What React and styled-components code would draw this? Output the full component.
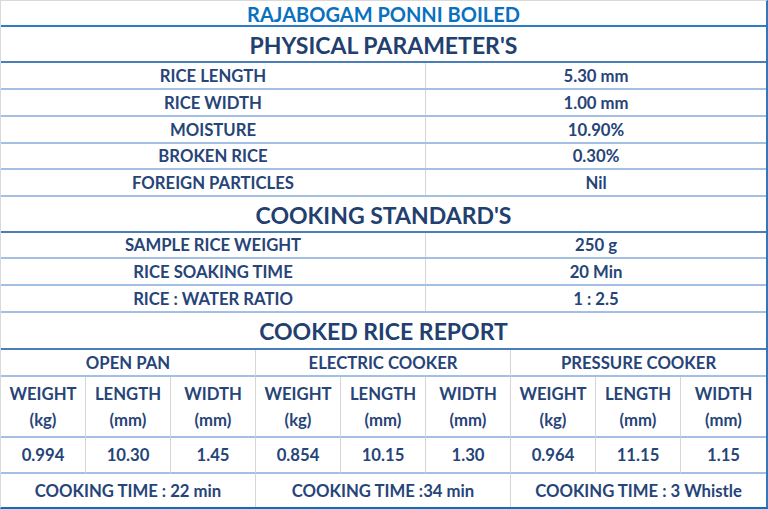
import React from 'react';
import styled, { createGlobalStyle } from 'styled-components';

const GlobalStyle = createGlobalStyle`
    html, body {
        margin: 0;
        padding: 0;
        background: #ffffff;
    }
`;

const Sheet = styled.div`
    width: 768px;
    height: 509px;
    box-sizing: border-box;
    border-top: 1px solid #d9d9d9;
    border-left: 1px solid #d9d9d9;
    border-right: 2px solid #2e78be;
    border-bottom: 2px solid #0a70c0;
    display: flex;
    flex-direction: column;
    font-family: Lato, "Open Sans", sans-serif;
    font-weight: 700;
    color: #264478;
    background: #ffffff;
    overflow: hidden;
`;

const Title = styled.div`
    height: 26px;
    box-sizing: border-box;
    border-bottom: 2px solid #2c7cc6;
    display: flex;
    align-items: center;
    justify-content: center;
    color: #0a70c0;
    font-size: 20px;
    padding-top: 1px;
`;

const SectionHead = styled.div`
    height: ${(p) => p.h}px;
    box-sizing: border-box;
    border-bottom: 2px solid #4a7ebb;
    display: flex;
    align-items: center;
    justify-content: center;
    color: #22406f;
    font-size: 23px;
    padding-top: 1px;
`;

const ParamRow = styled.div`
    height: ${(p) => p.h}px;
    box-sizing: border-box;
    border-bottom: 2px solid #a3c0e4;
    display: grid;
    grid-template-columns: 5fr 4fr;
    font-size: 16.7px;
`;

const ParamCell = styled.div`
    display: flex;
    align-items: center;
    justify-content: center;
    border-right: ${(p) => (p.divider ? '1px solid #d6d6d6' : 'none')};
`;

const CookGrid = styled.div`
    display: grid;
    grid-template-columns: repeat(9, 1fr);
    grid-template-rows: 27px 61px 36px 33px;
    font-size: 16.7px;
`;

const CookCell = styled.div`
    grid-column: span ${(p) => p.span || 1};
    box-sizing: border-box;
    display: flex;
    flex-direction: column;
    align-items: center;
    justify-content: center;
    text-align: center;
    line-height: 26px;
    border-right: ${(p) => (p.last ? 'none' : '1px solid #d6d6d6')};
    border-bottom: ${(p) => (p.bottom ? '2px solid #a3c0e4' : 'none')};
`;

const physical = [
    ['RICE LENGTH', '5.30 mm', 27],
    ['RICE WIDTH', '1.00 mm', 27],
    ['MOISTURE', '10.90%', 27],
    ['BROKEN RICE', '0.30%', 26],
    ['FOREIGN PARTICLES', 'Nil', 27],
];

const standard = [
    ['SAMPLE RICE WEIGHT', '250 g', 26],
    ['RICE SOAKING TIME', '20 Min', 27],
    ['RICE : WATER RATIO', '1 : 2.5', 27],
];

const methods = [
    { name: 'OPEN PAN', values: ['0.994', '10.30', '1.45'], time: 'COOKING TIME : 22 min' },
    { name: 'ELECTRIC COOKER', values: ['0.854', '10.15', '1.30'], time: 'COOKING TIME :34 min' },
    { name: 'PRESSURE COOKER', values: ['0.964', '11.15', '1.15'], time: 'COOKING TIME : 3 Whistle' },
];

const measures = [
    ['WEIGHT', '(kg)'],
    ['LENGTH', '(mm)'],
    ['WIDTH', '(mm)'],
];

function Params({ rows }) {
    return rows.map(([label, value, h]) => (
        <ParamRow key={label} h={h}>
            <ParamCell divider>{label}</ParamCell>
            <ParamCell>{value}</ParamCell>
        </ParamRow>
    ));
}

export default function App() {
    return (
        <>
            <GlobalStyle />
            <Sheet>
                <Title>RAJABOGAM PONNI BOILED</Title>
                <SectionHead h={36}>PHYSICAL PARAMETER&apos;S</SectionHead>
                <Params rows={physical} />
                <SectionHead h={36}>COOKING STANDARD&apos;S</SectionHead>
                <Params rows={standard} />
                <SectionHead h={37}>COOKED RICE REPORT</SectionHead>
                <CookGrid>
                    {methods.map((m, i) => (
                        <CookCell key={m.name} span={3} bottom last={i === 2}>
                            {m.name}
                        </CookCell>
                    ))}
                    {methods.map((m, i) => measures.map(([top, unit], j) => (
                        <CookCell key={`${m.name}-${top}`} bottom last={i === 2 && j === 2}>
                            <span>{top}</span>
                            <span>{unit}</span>
                        </CookCell>
                    )))}
                    {methods.map((m, i) => m.values.map((v, j) => (
                        <CookCell key={`${m.name}-v${j}`} bottom last={i === 2 && j === 2}>
                            {v}
                        </CookCell>
                    )))}
                    {methods.map((m, i) => (
                        <CookCell key={`${m.name}-t`} span={3} last={i === 2}>
                            {m.time}
                        </CookCell>
                    ))}
                </CookGrid>
            </Sheet>
        </>
    );
}
